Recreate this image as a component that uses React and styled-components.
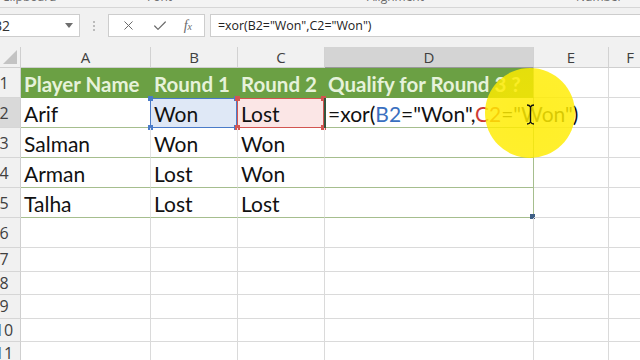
import styled, { createGlobalStyle } from "styled-components";
import { X, Check } from "lucide-react";

const GlobalStyle = createGlobalStyle`
  html, body {
    margin: 0;
    padding: 0;
    background: #ffffff;
  }
  body {
    width: 640px;
    height: 360px;
    overflow: hidden;
    font-family: "Lato", "Liberation Sans", sans-serif;
  }
`;

// table data
const columns = ["A", "B", "C", "D", "E", "F"];
const colWidths = [130, 87, 87, 209, 75, 43];
const rows = [
  ["Player Name", "Round 1", "Round 2", "Qualify for Round 3 ?"],
  ["Arif", "Won", "Lost", ""],
  ["Salman", "Won", "Won", ""],
  ["Arman", "Lost", "Won", ""],
  ["Talha", "Lost", "Lost", ""],
];
const TOTAL_ROWS = 11;

const GREEN_LINE = "#a6be8e";
const GRID_LINE = "#dadada";

const Screen = styled.div`
  position: relative;
  width: 640px;
  height: 360px;
  overflow: hidden;
  background: #ffffff;
`;

const Shift = styled.div`
  margin-left: -12px;
  width: 664px;
`;

// ribbon group captions, only their lower edge is in view
const RibbonStrip = styled.div`
  height: 7px;
  display: flex;
  overflow: hidden;
  background: #f3f3f3;
  border-bottom: 1px solid #d6d6d6;
`;

const RibbonLabel = styled.div`
  width: ${(p) => p.$w}px;
  padding-left: ${(p) => p.$pad}px;
  margin-top: -12px;
  font: 12px "Open Sans", "Liberation Sans", sans-serif;
  color: #6b6b6b;
  white-space: nowrap;
  box-sizing: border-box;
`;

const FormulaArea = styled.div`
  display: flex;
  align-items: center;
  height: 35px;
  background: #f1f1f1;
`;

const NameBox = styled.div`
  width: 92px;
  height: 23px;
  box-sizing: border-box;
  display: flex;
  align-items: center;
  justify-content: space-between;
  padding: 0 6px 0 4px;
  background: #ffffff;
  border: 1px solid #cdcdcd;
  font: 14px "Open Sans", "Liberation Sans", sans-serif;
  color: #333;
`;

const Caret = styled.span`
  width: 0;
  height: 0;
  border-left: 4px solid transparent;
  border-right: 4px solid transparent;
  border-top: 5px solid #6e6e6e;
`;

const Dots = styled.div`
  width: 28px;
  display: flex;
  flex-direction: column;
  align-items: center;
  gap: 2px;
  span {
    width: 2px;
    height: 2px;
    border-radius: 50%;
    background: #a9a9a9;
  }
`;

const FxGroup = styled.div`
  width: 97px;
  height: 23px;
  box-sizing: border-box;
  display: flex;
  align-items: center;
  justify-content: space-around;
  padding: 0 4px;
  background: #ffffff;
  border: 1px solid #cdcdcd;
  color: #6a6a6a;
`;

const FxText = styled.span`
  font: italic 14px "Liberation Serif", serif;
  color: #6a6a6a;
  span {
    font-size: 10px;
  }
`;

const FormulaInput = styled.div`
  flex: 1;
  height: 23px;
  margin-left: 5px;
  box-sizing: border-box;
  display: flex;
  align-items: center;
  padding-left: 7px;
  background: #ffffff;
  border: 1px solid #cdcdcd;
  border-right: none;
  font: 12.4px "Open Sans", "Liberation Sans", sans-serif;
  color: #222;
`;

const Gap = styled.div`
  height: 4px;
  background: #f1f1f1;
`;

const Sheet = styled.div`
  display: grid;
  grid-template-columns: 33px ${colWidths.map((w) => w + "px").join(" ")};
  grid-template-rows: 21px repeat(6, 30px) repeat(5, 23.5px);
`;

const Corner = styled.div`
  position: relative;
  background: #f1f1f1;
  border-right: 1px solid #cfcfcf;
  border-bottom: 1px solid #cfcfcf;
  box-sizing: border-box;
  &::after {
    content: "";
    position: absolute;
    right: 3px;
    bottom: 3px;
    width: 0;
    height: 0;
    border-left: 14px solid transparent;
    border-bottom: 14px solid #c3c3c3;
  }
`;

const ColHeader = styled.div`
  display: flex;
  align-items: center;
  justify-content: center;
  box-sizing: border-box;
  background: ${(p) => (p.$active ? "#d4d4d4" : "#f1f1f1")};
  border-right: 1px solid #d2d2d2;
  border-bottom: 1px solid ${(p) => (p.$active ? "#9a9a9a" : "#cfcfcf")};
  font: 15px "Open Sans", "Liberation Sans", sans-serif;
  color: #404040;
`;

const RowHeader = styled.div`
  display: flex;
  align-items: center;
  justify-content: center;
  box-sizing: border-box;
  background: ${(p) => (p.$active ? "#d9d9d9" : "#f1f1f1")};
  border-right: 1px solid #cfcfcf;
  border-bottom: 1px solid #d6d6d6;
  font: 16px "Open Sans", "Liberation Sans", sans-serif;
  color: #404040;
`;

const Cell = styled.div`
  position: relative;
  display: flex;
  align-items: flex-end;
  box-sizing: border-box;
  padding: 0 3px 1px;
  background: ${(p) => p.$fill || "transparent"};
  border-right: 1px solid ${(p) => p.$right || GRID_LINE};
  border-bottom: 1px solid ${(p) => p.$bottom || GRID_LINE};
  font-size: ${(p) => (p.$bold ? "20.5px" : "21px")};
  font-weight: ${(p) => (p.$bold ? 700 : 400)};
  color: ${(p) => p.$color || "#111"};
  white-space: nowrap;
`;

// coloured frame that Excel draws round a referenced cell
const RefFrame = styled.div`
  position: absolute;
  left: -1px;
  top: 0;
  right: 0;
  bottom: -1px;
  border: 1.5px solid ${(p) => p.$c};
  pointer-events: none;
  span {
    position: absolute;
    width: 5px;
    height: 5px;
    background: ${(p) => p.$c};
  }
  span:nth-child(1) { left: -3px; top: -3px; }
  span:nth-child(2) { right: -3px; top: -3px; }
  span:nth-child(3) { left: -3px; bottom: -3px; }
  span:nth-child(4) { right: -3px; bottom: -3px; }
`;

const ActiveEdge = styled.div`
  position: absolute;
  left: -1px;
  top: 0;
  bottom: -1px;
  width: 2px;
  background: #33553d;
`;

const Ref = styled.span`
  color: ${(p) => p.$c};
`;

const TextCaret = styled.span`
  display: inline-block;
  width: 1px;
  height: 24px;
  margin-left: 2px;
  margin-bottom: 1px;
  background: #111;
`;

const ResizeHandle = styled.div`
  position: absolute;
  right: -2px;
  bottom: -2px;
  width: 5px;
  height: 5px;
  background: #3e5f85;
`;

const Spotlight = styled.div`
  position: absolute;
  left: 485px;
  top: 68px;
  width: 90px;
  height: 90px;
  border-radius: 50%;
  background: radial-gradient(
    circle,
    rgba(255, 236, 0, 0.85) 0%,
    rgba(255, 236, 0, 0.82) 88%,
    rgba(255, 236, 0, 0) 100%
  );
  pointer-events: none;
`;

const IBeam = styled.svg`
  position: absolute;
  left: 526px;
  top: 104px;
  pointer-events: none;
`;

const ribbonGroups = [
  { label: "Clipboard", w: 130, pad: 14 },
  { label: "Font", w: 230, pad: 29 },
  { label: "Alignment", w: 190, pad: 19 },
  { label: "Number", w: 114, pad: 38 },
];

function cellProps(r, c) {
  const inTable = r < 5 && c < 4;
  const props = {};
  if (r === 0 && c < 4) {
    props.$fill = "#6ba044";
    props.$bold = true;
    props.$color = "#e6f2da";
    props.$bottom = "#6ba044";
    props.$right = c === 3 ? GREEN_LINE : "#6ba044";
  } else if (inTable) {
    props.$bottom = GREEN_LINE;
    props.$right = c === 3 ? GREEN_LINE : "#e4e4e4";
  }
  if (r === 1 && c === 1) props.$fill = "#dfe8f6";
  if (r === 1 && c === 2) props.$fill = "#fbe6e6";
  return props;
}

function CellContent({ r, c }) {
  if (r === 1 && c === 3) {
    return (
      <>
        <ActiveEdge />
        <span>
          =xor(<Ref $c="#3a6fc0">B2</Ref>="Won",<Ref $c="#cf3c36">C2</Ref>
          ="Won")
        </span>
        <TextCaret />
      </>
    );
  }
  const text = r < 5 && c < 4 ? rows[r][c] : "";
  return (
    <>
      {text}
      {r === 1 && c === 1 && (
        <RefFrame $c="#4a7bc8">
          <span />
          <span />
          <span />
          <span />
        </RefFrame>
      )}
      {r === 1 && c === 2 && (
        <RefFrame $c="#d25550">
          <span />
          <span />
          <span />
          <span />
        </RefFrame>
      )}
      {r === 4 && c === 3 && <ResizeHandle />}
    </>
  );
}

const App = () => {
  return (
    <Screen>
      <GlobalStyle />
      <Shift>
        <RibbonStrip>
          {ribbonGroups.map((g) => (
            <RibbonLabel key={g.label} $w={g.w} $pad={g.pad}>
              {g.label}
            </RibbonLabel>
          ))}
        </RibbonStrip>
        <FormulaArea>
          <NameBox>
            B2
            <Caret />
          </NameBox>
          <Dots>
            <span />
            <span />
            <span />
          </Dots>
          <FxGroup>
            <X size={15} strokeWidth={1.6} />
            <Check size={16} strokeWidth={1.8} />
            <FxText>
              f<span>x</span>
            </FxText>
          </FxGroup>
          <FormulaInput>=xor(B2="Won",C2="Won")</FormulaInput>
        </FormulaArea>
        <Gap />
        <Sheet>
          <Corner />
          {columns.map((col) => (
            <ColHeader key={col} $active={col === "D"}>
              {col}
            </ColHeader>
          ))}
          {Array.from({ length: TOTAL_ROWS }).map((_, r) => [
            <RowHeader key={"h" + r} $active={r === 1}>
              {r + 1}
            </RowHeader>,
            ...columns.map((col, c) => (
              <Cell key={col + r} {...cellProps(r, c)}>
                <CellContent r={r} c={c} />
              </Cell>
            )),
          ])}
        </Sheet>
      </Shift>
      <Spotlight />
      <IBeam width="9" height="21" viewBox="0 0 9 21">
        <path
          d="M1 1 C3 1 4 2 4.5 3 C5 2 6 1 8 1 M4.5 3 V18 M1 20 C3 20 4 19 4.5 18 C5 19 6 20 8 20"
          fill="none"
          stroke="#111"
          strokeWidth="1.4"
        />
      </IBeam>
    </Screen>
  );
};

export default App;
